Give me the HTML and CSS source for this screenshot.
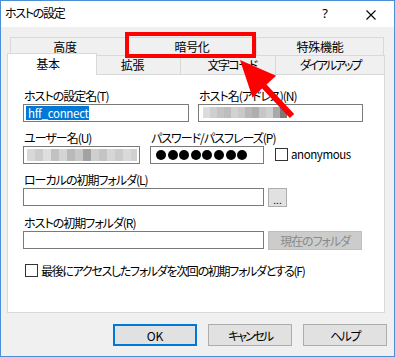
FILE: index.html
```html
<!DOCTYPE html>
<html lang="ja">
<head>
<meta charset="utf-8">
<title>ホストの設定</title>
<link rel="stylesheet" href="styles.css">
</head>
<body>
<div class="window">
  <div class="titlebar">
    <span class="title">ホストの設定</span>
    <span class="help">?</span>
    <span class="close"><svg width="10" height="10" viewBox="0 0 10 10"><path d="M0.5 0.5L9.5 9.5M9.5 0.5L0.5 9.5" stroke="#000" stroke-width="1.1" fill="none"/></svg></span>
  </div>

  <div class="tabs">
    <div class="tabrow back">
      <div class="tab kanji w-adv">高度</div>
      <div class="tab kanji w-enc">暗号化</div>
      <div class="tab kanji w-spe last">特殊機能</div>
    </div>
    <div class="tabrow front">
      <div class="tab kanji sel w-basic">基本</div>
      <div class="tab kanji w-ext">拡張</div>
      <div class="tab mixed w-code">文字コード</div>
      <div class="tab kana w-dial last">ダイアルアップ</div>
    </div>
  </div>

  <div class="panel">
    <div class="row r1">
      <div class="field f-name">
        <div class="label">ホストの設定名(T)</div>
        <div class="box"><span class="seltext">hff_connect</span></div>
      </div>
      <div class="field f-host">
        <div class="label">ホスト名(アドレス)(N)</div>
        <div class="box"><span class="mosaic m-host"></span></div>
      </div>
    </div>

    <div class="row r2">
      <div class="field f-user">
        <div class="label">ユーザー名(U)</div>
        <div class="box"><span class="mosaic m-user"></span></div>
      </div>
      <div class="field f-pass">
        <div class="label">パスワード/パスフレーズ(P)</div>
        <div class="box dotsbox"><i class="dot"></i><i class="dot"></i><i class="dot"></i><i class="dot"></i><i class="dot"></i><i class="dot"></i><i class="dot"></i><i class="dot"></i></div>
      </div>
      <label class="check anon"><span class="cb"></span><span class="cbtext latin">anonymous</span></label>
    </div>

    <div class="row-block r3">
      <div class="label">ローカルの初期フォルダ(L)</div>
      <div class="line">
        <div class="box wide"></div>
        <div class="btn small">...</div>
      </div>
    </div>

    <div class="row-block r4">
      <div class="label">ホストの初期フォルダ(R)</div>
      <div class="line">
        <div class="box wide"></div>
        <div class="btn disabled">現在のフォルダ</div>
      </div>
    </div>

    <label class="check last-check"><span class="cb"></span><span class="cbtext long">最後にアクセスしたフォルダを次回の初期フォルダとする(F)</span></label>
  </div>

  <div class="buttons">
    <div class="btn dlg default latin-btn">OK</div>
    <div class="btn dlg kana">キャンセル</div>
    <div class="btn dlg mixed">ヘルプ</div>
  </div>

  <svg class="annot" width="395" height="357" viewBox="0 0 395 357">
    <rect x="127" y="34" width="127" height="22" fill="none" stroke="#ff0000" stroke-width="4"/>
    <polygon points="240,60 276.1,75.8 266.5,84.6 294.2,114 289.8,118 262.1,88.6 252.5,97.4" fill="#ff0000"/>
  </svg>
</div>
</body>
</html>
```

FILE: styles.css
```css
html, body {
  margin: 0;
  padding: 0;
  background: #ffffff;
}

body {
  font-family: "Noto Sans CJK JP", "Noto Sans", sans-serif;
  font-size: 12px;
  color: #000;
  font-feature-settings: "palt";
  letter-spacing: -1px;
}

.kanji { letter-spacing: -0.3px; }
.mixed { letter-spacing: -1.5px; }
.kana { letter-spacing: -2.1px; }

.window {
  position: relative;
  width: 395px;
  height: 357px;
  box-sizing: border-box;
  border: 1px solid #4d8fd6;
  background: #f0f0f0;
  overflow: hidden;
}

.titlebar {
  display: flex;
  align-items: flex-start;
  height: 26px;
  background: #ffffff;
}

.title {
  padding-left: 4px;
  line-height: 24px;
  flex: 1;
  letter-spacing: -1.3px;
}

.help {
  width: 46px;
  text-align: center;
  line-height: 24px;
  font-size: 13px;
  font-family: "Noto Sans", sans-serif;
  letter-spacing: 0;
}

.close {
  width: 46px;
  height: 24px;
  display: flex;
  align-items: center;
  justify-content: center;
}

.close svg {
  display: block;
  margin-top: 4px;
}

/* tabs */
.tabs {
  margin: 10px 0 0 6px;
}

.tabrow {
  display: flex;
}

.tabrow.back {
  margin-left: 3px;
}

.tabrow.front {
  height: 19px;
  align-items: flex-end;
}

.tab {
  box-sizing: border-box;
  border-top: 1px solid #d9d9d9;
  border-left: 1px solid #d9d9d9;
  background: #f0f0f0;
  text-align: center;
  white-space: nowrap;
}

.tab.last {
  border-right: 1px solid #d9d9d9;
}

.back .tab {
  height: 18px;
  line-height: 17px;
}

.front .tab {
  height: 19px;
  line-height: 18px;
}

.front .tab.sel {
  position: relative;
  z-index: 1;
  height: 22px;
  line-height: 20px;
  margin-bottom: -1px;
  background: #ffffff;
  border-right: 1px solid #d9d9d9;
}

.front .tab.sel + .tab {
  border-left: none;
}

.w-adv { width: 117px; padding-right: 8px; }
.w-enc { width: 129px; }
.w-spe { width: 128px; }
.w-basic { width: 90px; padding-right: 8px; }
.w-ext { width: 83px; padding-right: 12px; }
.w-code { width: 95px; padding-left: 8px; }
.w-dial { width: 110px; }

/* panel */
.panel {
  box-sizing: border-box;
  width: 378px;
  height: 239px;
  margin-left: 6px;
  border: 1px solid #d9d9d9;
  background: #ffffff;
  padding: 13px 0 0 15px;
}

.row {
  display: flex;
}

.r1 { gap: 9px; }
.r2 { gap: 10px; margin-top: 8px; }
.r3 { margin-top: 8px; }
.r4 { margin-top: 8px; }

.label {
  line-height: 15px;
  margin-bottom: 1px;
  padding-left: 1px;
  white-space: nowrap;
}

.box {
  box-sizing: border-box;
  height: 18px;
  border: 1px solid #7a7a7a;
  background: #ffffff;
  padding: 1px 2px;
  display: flex;
  align-items: flex-start;
}

.f-name { width: 166px; }
.f-host { width: 165px; }
.f-user { width: 117px; }
.f-pass { width: 114px; }

.seltext {
  background: #0078d7;
  color: #ffffff;
  line-height: 14px;
  padding: 0 0 0 2px;
  font-size: 11.5px;
  letter-spacing: -0.3px;
}

.mosaic {
  display: block;
}

.m-host {
  width: 84px;
  height: 11px;
  margin: 1px 0 0 2px;
  background:
    linear-gradient(to right,
      #dcdcdc 0 7px, #cfcfcf 7px 14px, #c4c4c4 14px 21px, #bdbdbd 21px 28px,
      #d2d2d2 28px 35px, #c9c9c9 35px 42px, #b8b8b8 42px 49px, #aeaeae 49px 56px,
      #c6c6c6 56px 63px, #d0d0d0 63px 70px, #a9a9a9 70px 77px, #7a7a7a 77px 84px);
}

.m-user {
  width: 110px;
  height: 12px;
  margin: 1px 0 0 1px;
  background:
    linear-gradient(to right,
      #d8d8d8 0 8px, #cccccc 8px 16px, #dedede 16px 24px, #c2c2c2 24px 32px,
      #d4d4d4 32px 40px, #b9b9b9 40px 48px, #c8c8c8 48px 56px, #a2a2a2 56px 64px,
      #cfcfcf 64px 72px, #c4c4c4 72px 80px, #d6d6d6 80px 88px, #cbcbcb 88px 96px,
      #d9d9d9 96px 104px, #d0d0d0 104px 110px);
}

.dotsbox {
  align-items: center;
  padding: 0 0 0 5px;
}

.dot {
  display: block;
  width: 10px;
  height: 10px;
  border-radius: 50%;
  background: #000;
  margin-right: 1.6px;
}

.check {
  display: flex;
  align-items: center;
}

.cb {
  box-sizing: border-box;
  width: 13px;
  height: 13px;
  border: 1px solid #333333;
  background: #ffffff;
  flex: none;
}

.cbtext {
  margin-left: 3px;
  line-height: 15px;
  white-space: nowrap;
}

.cbtext.long {
  letter-spacing: -1.3px;
}

.latin {
  font-size: 11.5px;
  letter-spacing: -0.4px;
}

.anon {
  align-self: flex-end;
  margin: 0 0 2px 1px;
}

.line {
  display: flex;
  align-items: flex-start;
  gap: 4px;
}

.box.wide {
  width: 241px;
}

.btn {
  box-sizing: border-box;
  border: 1px solid #adadad;
  background: #e1e1e1;
  display: flex;
  align-items: center;
  justify-content: center;
  white-space: nowrap;
}

.btn.small {
  width: 19px;
  height: 19px;
  font-size: 10px;
  line-height: 10px;
  padding-top: 4px;
  letter-spacing: 0;
}

.btn.disabled {
  width: 94px;
  height: 19px;
  background: #cccccc;
  border-color: #bfbfbf;
  color: #8a8a8a;
  letter-spacing: -1.1px;
}

.last-check {
  margin: 13px 0 0 2px;
}

.buttons {
  display: flex;
  justify-content: flex-end;
  gap: 11px;
  margin-top: 11px;
  padding-right: 7px;
}

.btn.dlg {
  width: 84px;
  height: 22px;
}

.btn.latin-btn {
  letter-spacing: 0;
}

.btn.default {
  border: 2px solid #0078d7;
}

.annot {
  position: absolute;
  left: -1px;
  top: -1px;
  pointer-events: none;
}
```
